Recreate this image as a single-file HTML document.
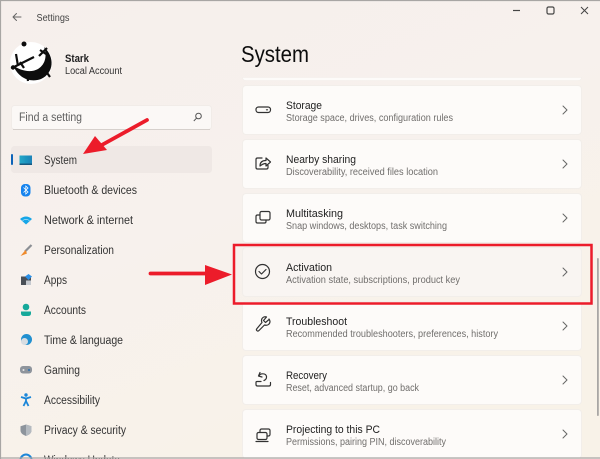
<!DOCTYPE html>
<html><head><meta charset="utf-8"><title>Settings</title>
<style>
html,body{margin:0;padding:0;width:600px;height:459px;overflow:hidden;background:#fff}
svg{display:block;position:absolute;left:0;top:0}
text{font-family:"Liberation Sans",sans-serif}
.n{font-size:11.5px;fill:#333}
.t{font-size:11.3px;fill:#222}
.s{font-size:10px;fill:#706e6c}
.i{fill:none;stroke:#333;stroke-width:1.200;stroke-linecap:round;stroke-linejoin:round}
.c{fill:none;stroke:#666;stroke-width:1;stroke-linecap:round;stroke-linejoin:round}
</style></head><body>
<svg width="600" height="459" viewBox="0 0 600 459" xmlns="http://www.w3.org/2000/svg">
<defs>
<linearGradient id="bg" x1="0" y1="0" x2="0.55" y2="1">
<stop offset="0" stop-color="#f6efec"/><stop offset="0.5" stop-color="#f7f1ed"/><stop offset="1" stop-color="#f8f2e8"/>
</linearGradient>
<linearGradient id="sys" x1="0" y1="0" x2="1" y2="0"><stop offset="0" stop-color="#22a8c8"/><stop offset="1" stop-color="#1c82b8"/></linearGradient>
<filter id="b" x="-5%" y="-5%" width="110%" height="110%"><feGaussianBlur stdDeviation="0.35"/></filter>
</defs>
<rect width="600" height="459" fill="url(#bg)"/>
<g filter="url(#b)">
<!-- title bar -->
<path d="M13 17H21M13 17l3.500-3.500M13 17l3.500 3.500" class="c"/>
<text x="36.500" y="21" font-size="10.500" fill="#444" textLength="33" lengthAdjust="spacingAndGlyphs">Settings</text>
<path d="M513 10.500h7" stroke="#444" stroke-width="1.200" fill="none"/>
<rect x="547" y="7" width="7" height="7" rx="1.500" fill="none" stroke="#444" stroke-width="1.200"/>
<path d="M581 7l7 7M588 7l-7 7" stroke="#444" stroke-width="1" fill="none"/>

<!-- avatar -->
<circle cx="31" cy="63" r="21" fill="#fff"/>
<path d="M44 47C55 57 54 73 41 79C30 83 18 78 13 65C20 71 31 73 38 69C46 64 47 55 44 47Z" fill="#0c0c0c"/>
<path d="M12 68L34 57M16 54L18 66M39 56L47 48M40 50L46 54M27 73L28 81M45 70L50 77M20 62L24 68" stroke="#0c0c0c" stroke-width="2.200" fill="none"/>
<circle cx="24" cy="44" r="2.500" fill="#0c0c0c"/><circle cx="13" cy="67.500" r="2.200" fill="#0c0c0c"/>
<text x="65" y="62" font-size="11" font-weight="bold" fill="#222" textLength="24" lengthAdjust="spacingAndGlyphs">Stark</text>
<text x="65" y="74" font-size="10" fill="#333" textLength="57" lengthAdjust="spacingAndGlyphs">Local Account</text>

<!-- search -->
<rect x="11.500" y="105.500" width="200" height="24" rx="3" fill="#fbf8f6" stroke="#f1ece8"/>
<path d="M13 129.500H210" stroke="#d6d0cc" stroke-width="1"/>
<text x="19" y="121" font-size="11.500" fill="#5e5e5e" textLength="63" lengthAdjust="spacingAndGlyphs">Find a setting</text>
<circle cx="198.500" cy="116" r="2.800" fill="none" stroke="#555" stroke-width="1"/>
<path d="M196.500 118.200L193.800 121" stroke="#555" stroke-width="1"/>

<!-- nav -->
<rect x="11" y="146" width="201" height="27" rx="3.500" fill="#efe8e5"/>
<rect x="11" y="154" width="2" height="11" rx="1" fill="#0a63b8"/>
<rect x="19.500" y="155.500" width="12.500" height="9.500" fill="url(#sys)"/><rect x="19.500" y="163.500" width="12.500" height="1.500" fill="#12587f"/>
<text class="n" x="44" y="164" textLength="33" lengthAdjust="spacingAndGlyphs">System</text>

<rect x="21" y="184" width="9.500" height="12.500" rx="4" fill="#1283ee"/>
<path d="M23.500 187.500l4.500 4.500-2.200 2v-8l2.200 2-4.500 4.500" fill="none" stroke="#fff" stroke-width=".8"/>
<text class="n" x="44" y="194" textLength="93" lengthAdjust="spacingAndGlyphs">Bluetooth &amp; devices</text>

<path d="M20 219Q26 214 32 219L26 224.500Z" fill="#19a6e8"/><path d="M22.500 220.500Q26 218.500 29.500 220.500" stroke="#fff" stroke-width=".5" fill="none"/>
<text class="n" x="44" y="224" textLength="89" lengthAdjust="spacingAndGlyphs">Network &amp; internet</text>

<path d="M31.500 245L25 251.500" stroke="#8b8f94" stroke-width="2.200"/><path d="M25.500 250L20.500 256L27 253.500Z" fill="#ef8a2b"/>
<text class="n" x="44" y="254" textLength="70" lengthAdjust="spacingAndGlyphs">Personalization</text>

<rect x="21" y="276.500" width="10" height="8.500" fill="#4a4f57"/><rect x="26" y="280.500" width="5" height="4.500" fill="#c5c9cf"/><path d="M25 276.500l3.500-2.500 3.500 2.500-3.500 3.500Z" fill="#2c8fe6"/>
<text class="n" x="44" y="284" textLength="23" lengthAdjust="spacingAndGlyphs">Apps</text>

<circle cx="26" cy="307" r="3.300" fill="#16a99a"/><path d="M21 311.500h10v2q0 2.500-3 2.500h-4q-3 0-3-2.500z" fill="#16a99a"/>
<text class="n" x="44" y="314" textLength="42" lengthAdjust="spacingAndGlyphs">Accounts</text>

<circle cx="26.500" cy="339.500" r="5.500" fill="#2190d0"/><circle cx="24.500" cy="341.500" r="3.500" fill="#d7dde2"/>
<text class="n" x="44" y="344" textLength="79" lengthAdjust="spacingAndGlyphs">Time &amp; language</text>

<rect x="20" y="366" width="12" height="7.500" rx="3" fill="#8e949c"/><circle cx="23.500" cy="370" r="1" fill="#e5e5e5"/><circle cx="29" cy="370" r="1" fill="#2a6fb0"/>
<text class="n" x="44" y="374" textLength="36" lengthAdjust="spacingAndGlyphs">Gaming</text>

<circle cx="26" cy="395" r="1.700" fill="#1a86d8"/><path d="M21 397l5 1.500 5-1.500M26 398v3M26 401l-2.500 5M26 401l2.500 5" stroke="#1a86d8" stroke-width="1.800" fill="none"/>
<text class="n" x="44" y="404" textLength="56" lengthAdjust="spacingAndGlyphs">Accessibility</text>

<path d="M26 424.500l5.500 1.800v4c0 3-2.500 4.700-5.500 5.700c-3-1-5.500-2.700-5.500-5.700v-4Z" fill="#8d949c"/><path d="M26 424.500l5.500 1.800v4c0 3-2.500 4.700-5.500 5.700Z" fill="#b4bac0"/>
<text class="n" x="44" y="434" textLength="82" lengthAdjust="spacingAndGlyphs">Privacy &amp; security</text>

<circle cx="26" cy="460" r="5.500" fill="none" stroke="#1a86d8" stroke-width="2"/>
<text class="n" x="44" y="464" textLength="76" lengthAdjust="spacingAndGlyphs">Windows Update</text>

<!-- main -->
<text x="241" y="62" font-size="23" fill="#111" textLength="68" lengthAdjust="spacingAndGlyphs">System</text>

<path d="M242.500 77.500h339v-0.500q0 3.500-3.500 3.500h-332q-3.500 0-3.500-3.500z" fill="#fdfbf9" stroke="#f2eeea" stroke-width=".6"/>

<g fill="#fdfbf9" stroke="#f2eeea" stroke-width="1">
<rect x="242.500" y="85.500" width="339" height="49" rx="3.500"/>
<rect x="242.500" y="139.500" width="339" height="49" rx="3.500"/>
<rect x="242.500" y="193.500" width="339" height="49" rx="3.500"/>
<rect x="242.500" y="247.500" width="339" height="49" rx="3.500" fill="#f9f5f2"/>
<rect x="242.500" y="301.500" width="339" height="49" rx="3.500"/>
<rect x="242.500" y="355.500" width="339" height="49" rx="3.500"/>
<rect x="242.500" y="409.500" width="339" height="49" rx="3.500"/>
</g>

<text class="t" x="286" y="109" textLength="36" lengthAdjust="spacingAndGlyphs">Storage</text>
<text class="s" x="286" y="121" textLength="167" lengthAdjust="spacingAndGlyphs">Storage space, drives, configuration rules</text>
<text class="t" x="286" y="163" textLength="70" lengthAdjust="spacingAndGlyphs">Nearby sharing</text>
<text class="s" x="286" y="175" textLength="152" lengthAdjust="spacingAndGlyphs">Discoverability, received files location</text>
<text class="t" x="286" y="217" textLength="57" lengthAdjust="spacingAndGlyphs">Multitasking</text>
<text class="s" x="286" y="229" textLength="161" lengthAdjust="spacingAndGlyphs">Snap windows, desktops, task switching</text>
<text class="t" x="286" y="271" textLength="46" lengthAdjust="spacingAndGlyphs">Activation</text>
<text class="s" x="286" y="283" textLength="174" lengthAdjust="spacingAndGlyphs">Activation state, subscriptions, product key</text>
<text class="t" x="286" y="325" textLength="61" lengthAdjust="spacingAndGlyphs">Troubleshoot</text>
<text class="s" x="286" y="337" textLength="212" lengthAdjust="spacingAndGlyphs">Recommended troubleshooters, preferences, history</text>
<text class="t" x="286" y="379" textLength="41" lengthAdjust="spacingAndGlyphs">Recovery</text>
<text class="s" x="286" y="391" textLength="133" lengthAdjust="spacingAndGlyphs">Reset, advanced startup, go back</text>
<text class="t" x="286" y="433" textLength="94" lengthAdjust="spacingAndGlyphs">Projecting to this PC</text>
<text class="s" x="286" y="445" textLength="160" lengthAdjust="spacingAndGlyphs">Permissions, pairing PIN, discoverability</text>

<!-- card icons -->
<rect x="256" y="107" width="14.500" height="5.500" rx="2.500" class="i"/><path d="M266.500 109.800h1" class="i"/>
<path d="M262 158h-4.500q-1.500 0-1.500 1.500v8q0 1.500 1.500 1.500h9q1.500 0 1.500-1.500v-2M260 166q0-5.500 6-5.500v-2.500l4.500 4-4.500 4v-2.500q-3 0-6 2.500" class="i"/>
<rect x="260" y="211.500" width="10" height="8.500" rx="1.500" class="i"/><path d="M260 215h-2.500q-1.500 0-1.500 1.500v5q0 1.500 1.500 1.500h7q1.500 0 1.500-1.500V220" class="i"/>
<circle cx="262.500" cy="271.500" r="7" class="i"/><path d="M259 271.500l2.500 2.500 4.500-4.500" class="i"/>
<path d="M269 319.500l-3.500 3-2-2 3-3.500c-2.500-.8-5 .8-5 3.500 0 .8.200 1.500.500 2L257 328.500c-1.500 1.500.5 3.500 2 2l5.500-5.500c3 1 5.500-1 5.500-3.500 0-.8-.300-1.500-1-2.500Z" class="i"/>
<path d="M260 372.500l-1.500 3.500 3.500 1M259 376c1-3 7-3 7.500.5.200 2-1 3.500-2.500 4M256 384.500v-2q0-1 1-1h4M256 384.500q0 1.500 1.500 1.500h11.500q1.500 0 1.500-1.500v-2" class="i"/>
<rect x="260" y="429" width="10" height="7" rx="1.500" class="i"/><rect x="257" y="432.500" width="10" height="7" rx="1.500" class="i" style="fill:#fdfbf9"/><path d="M256 441.500h12" class="i"/>

<!-- chevrons -->
<path class="c" d="M563 106l4 4-4 4"/><path class="c" d="M563 160l4 4-4 4"/><path class="c" d="M563 214l4 4-4 4"/><path class="c" d="M563 268l4 4-4 4"/><path class="c" d="M563 322l4 4-4 4"/><path class="c" d="M563 376l4 4-4 4"/><path class="c" d="M563 430l4 4-4 4"/>

<!-- scrollbar -->
<rect x="597" y="258" width="1.800" height="158" rx=".9" fill="#a9a7a5"/>

<!-- annotations -->
<rect x="234" y="245" width="357.500" height="58.500" fill="none" stroke="#ec1c2c" stroke-width="2.500"/>
<path d="M147 120L100 146" stroke="#ec1c2c" stroke-width="3.800" stroke-linecap="round"/>
<path d="M83 154L95 136L107 150Z" fill="#ec1c2c"/>
<path d="M150.500 273.500H206" stroke="#ec1c2c" stroke-width="3.800" stroke-linecap="round"/>
<path d="M205 265L232 274.500L205 285Z" fill="#ec1c2c"/>

<!-- frame -->
<path d="M0 .5H600M.5 0V459M0 458H600" stroke="#a8a6a4" stroke-width="1.200" fill="none"/>
</g>
</svg>
</body></html>
